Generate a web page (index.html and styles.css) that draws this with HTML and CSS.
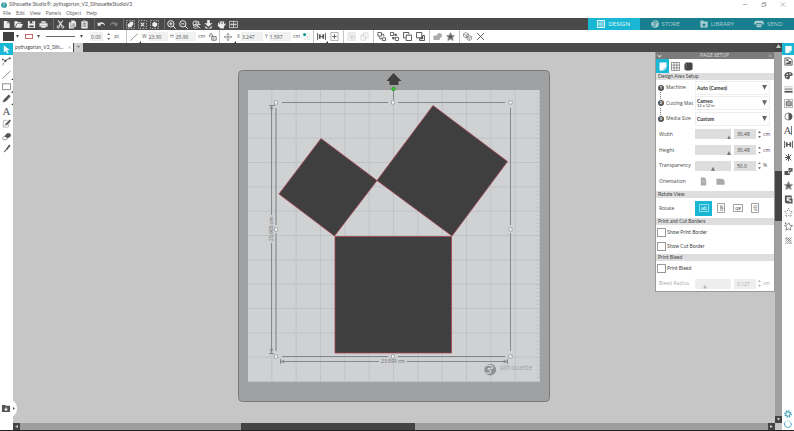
FILE: index.html
```html
<!DOCTYPE html>
<html lang="en">
<head>
<meta charset="utf-8">
<title>Silhouette Studio</title>
<link rel="stylesheet" href="styles.css">
</head>
<body>
<svg class="sprite" aria-hidden="true">
  <symbol id="new" viewBox="0 0 20 20"><path fill="currentColor" d="M4 2h8l5 5v11H4z"/><path d="M12 2v5h5" stroke="#4a4a4a" fill="none"/></symbol>
  <symbol id="open" viewBox="0 0 20 20"><path fill="currentColor" d="M1 3h6l2 2h7v3H6L2 16H1zM7 9h13l-4 8H3z"/></symbol>
  <symbol id="save" viewBox="0 0 20 20"><path fill="currentColor" fill-rule="evenodd" d="M2 2h16v16H2zM6 2v6h8V2zM5 12v4h10v-4z"/><path fill="currentColor" d="M11 3h2v4h-2z"/></symbol>
  <symbol id="print" viewBox="0 0 20 20"><path fill="currentColor" d="M5 3h10v3H5zM1 7h18v8h-3v-3H4v3H1zM5 13h10v4H5z"/></symbol>
  <symbol id="cut" viewBox="0 0 20 20"><path d="M5 1l8 12M15 1L7 13" stroke="currentColor" stroke-width="2.400" fill="none"/><circle cx="5" cy="15.500" r="2.500" stroke="currentColor" stroke-width="2" fill="none"/><circle cx="15" cy="15.500" r="2.500" stroke="currentColor" stroke-width="2" fill="none"/></symbol>
  <symbol id="copy" viewBox="0 0 20 20"><path fill="currentColor" d="M7 1h7l4 4v10H7zM2 5h4v11h8v3H2z"/><path d="M10 9h5M10 12h5" stroke="#4a4a4a" stroke-width="1.500"/></symbol>
  <symbol id="paste" viewBox="0 0 20 20"><path fill="currentColor" d="M3 3h4V1h6v2h4v16H3z"/><path d="M6 8h8M6 11h8M6 14h8M7 4h6" stroke="#4a4a4a" stroke-width="1.300"/></symbol>
  <symbol id="undo" viewBox="0 0 20 20"><path fill="currentColor" d="M1 5l1 9 8-3-3-2c4-2 8 0 11 4C17 6 10 3 4 7z"/></symbol>
  <symbol id="redo" viewBox="0 0 20 20"><path fill="currentColor" d="M19 5l-1 9-8-3 3-2C9 7 5 9 2 13 3 6 10 3 16 7z"/></symbol>
  <symbol id="selall" viewBox="0 0 20 20"><path d="M1 1h18v18H1z" fill="none" stroke="currentColor" stroke-width="1.500" stroke-dasharray="3 3"/><path fill="currentColor" d="M8 4h8v8h-3v4H4V8h4z"/></symbol>
  <symbol id="selnone" viewBox="0 0 20 20"><path d="M1 1h18v18H1z" fill="none" stroke="currentColor" stroke-width="1.500" stroke-dasharray="3 3"/><path d="M6 6l8 8M14 6l-8 8" stroke="currentColor" stroke-width="2.500"/></symbol>
  <symbol id="selcolor" viewBox="0 0 20 20"><path d="M1 1h18v18H1z" fill="none" stroke="currentColor" stroke-width="1.500" stroke-dasharray="3 3"/><path fill="currentColor" d="M5 7l5-3 6 3v6l-5 3-6-3z"/></symbol>
  <symbol id="zoomin" viewBox="0 0 20 20"><g fill="none" stroke="currentColor" stroke-width="2.200"><circle cx="8.500" cy="8.500" r="7"/><path d="M13.500 13.500l6 6M8.500 5v7M5 8.500h7"/></g></symbol>
  <symbol id="zoomout" viewBox="0 0 20 20"><g fill="none" stroke="currentColor" stroke-width="2.200"><circle cx="8.500" cy="8.500" r="7"/><path d="M13.500 13.500l6 6M5 8.500h7"/></g></symbol>
  <symbol id="zoomsel" viewBox="0 0 20 20"><g fill="none" stroke="currentColor" stroke-width="2"><circle cx="8" cy="8" r="6"/><path d="M12.500 12.500l6 6M9 3v10M15 3v7h4" /><path d="M4 10h9v8H4z" stroke-dasharray="2 1"/></g></symbol>
  <symbol id="zoomdrag" viewBox="0 0 20 20"><path fill="currentColor" d="M7 0h6v7h6l-9 8-9-8h6zM1 13l9 6 9-6-3 6H4z"/></symbol>
  <symbol id="hand" viewBox="0 0 20 20"><path d="M5 11L3 6M8 9L7 3M11 9V2M14 10l1-7M16 12l3-4" stroke="currentColor" stroke-width="2.400"/><path fill="currentColor" d="M4 9h13l-2 10H8L1 12z"/></symbol>
  <symbol id="fit" viewBox="0 0 20 20"><path d="M1 3h18v14H1zM10 3v14" fill="none" stroke="currentColor" stroke-width="1.600"/><path d="M4 10h12M7 7l-3 3 3 3M13 7l3 3-3 3" fill="none" stroke="currentColor" stroke-width="1.600"/></symbol>

  <symbol id="gridbox" viewBox="0 0 20 20"><path d="M1 1h18v18H1z" fill="none" stroke="#fff" stroke-width="2.500"/><path d="M5 5h10v10H5zM10 4v12M4 10h12" fill="none" stroke="#fff" stroke-width="1.300"/></symbol>
  <symbol id="swirl" viewBox="0 0 20 20"><circle cx="10" cy="10" r="9.500" fill="currentColor"/><path d="M1 5c5-4 14-2 13 2-1 2-5 0-7 1s4 2 4 5-5 3-8 2" fill="none" stroke="var(--cut, #177f8e)" stroke-width="2"/></symbol>
  <symbol id="library" viewBox="0 0 20 20"><path fill="currentColor" d="M1 1h7l2 3h9v15H1z"/><path d="M10 7v5M6 11h8l-4 5z" fill="#177f8e" stroke="#177f8e" stroke-width="1.500"/></symbol>
  <symbol id="send" viewBox="0 0 24 20"><path fill="currentColor" d="M3 2h18l3 4v5h-4V8H4v3H0V6zM6 10h12v8H6z"/><path d="M8 13h8" stroke="#177f8e" stroke-width="1.500"/></symbol>

  <symbol id="arrow" viewBox="0 0 20 20"><path fill="currentColor" d="M4 1l13 10-6 1 4 6-3 1-4-6-4 4z"/></symbol>
  <symbol id="nodes" viewBox="0 0 20 20"><path d="M2 19C3 12 9 5 19 3M1 5l7 3 6-4" fill="none" stroke="currentColor" stroke-width="1.300"/><circle cx="7.500" cy="8.500" r="2.600" fill="currentColor"/><path fill="currentColor" d="M0 4h3v3H0zM15 1h4v4h-4z"/></symbol>
  <symbol id="line" viewBox="0 0 20 20"><path d="M1 19L19 2" stroke="currentColor" stroke-width="1.500"/></symbol>
  <symbol id="rect" viewBox="0 0 20 20"><path d="M1 4h18v13H1z" fill="none" stroke="currentColor" stroke-width="1.500"/></symbol>
  <symbol id="pencil" viewBox="0 0 20 20"><path fill="currentColor" d="M15 1l4 4L9 16l-8 3 3-7z"/></symbol>
  <symbol id="sketch" viewBox="0 0 20 20"><path d="M12 3H4L2 18h12l2-8" fill="none" stroke="#999" stroke-width="1.500"/><path d="M5 15l8-9" stroke="#999" stroke-width="1.300"/><path fill="currentColor" d="M17 1l3 3-8 9-5 2 2-5z"/></symbol>
  <symbol id="eraser" viewBox="0 0 20 20"><path fill="currentColor" d="M11 3h6l3 3-1 4-6 4-8-4z"/><path d="M5 10c-5 2-5 6-1 7h5l4-3" fill="none" stroke="currentColor" stroke-width="1.300"/></symbol>
  <symbol id="knife" viewBox="0 0 20 20"><path fill="currentColor" d="M16 1l3 3-8 10-3-2zM7 13l3 2-7 4z"/></symbol>

  <symbol id="move" viewBox="0 0 20 20"><path d="M10 1v18M1 10h18M7 4l3-3 3 3M7 16l3 3 3-3M4 7l-3 3 3 3M16 7l3 3-3 3" fill="none" stroke="currentColor" stroke-width="1.500"/></symbol>
  <symbol id="lock" viewBox="0 0 20 20"><path d="M2 10V4c0-3 6-3 6 0v6" fill="none" stroke="currentColor" stroke-width="2"/><path d="M7 9h11v9H7z" fill="none" stroke="currentColor" stroke-width="2"/><path d="M12 11v5" stroke="currentColor" stroke-width="2"/></symbol>
  <symbol id="align" viewBox="0 0 20 20"><path d="M1 2v16M19 2v16" stroke="currentColor" stroke-width="2"/><path fill="currentColor" d="M4 5h4v10H4zM12 5h4v10h-4zM8 9h4v2H8z"/></symbol>
  <symbol id="center" viewBox="0 0 20 20"><path d="M2 1h16v18H2z" fill="none" stroke="currentColor"/><path d="M10 5v10M5 10h10" stroke="currentColor" stroke-width="2"/></symbol>
  <symbol id="group" viewBox="0 0 20 20"><path d="M2 2h16v16H2zM6 6h6v6H6zM9 9h6v6H9z" fill="none" stroke="currentColor" stroke-width="1.500" stroke-dasharray="3 1"/></symbol>
  <symbol id="ungroup" viewBox="0 0 20 20"><path d="M7 2h11v11H7zM2 7h11v11H2z" fill="none" stroke="currentColor" stroke-width="1.500" stroke-dasharray="3 1"/></symbol>
  <symbol id="front" viewBox="0 0 20 20"><path d="M2 1h8v8H2zM12 13h7v6h-7z" fill="none" stroke="currentColor" stroke-width="2"/><path d="M11 5h4v5M6 10v5h5" fill="none" stroke="currentColor" stroke-width="2"/></symbol>
  <symbol id="back" viewBox="0 0 20 20"><path d="M1 1h7v7H1zM12 12h7v7h-7z" fill="none" stroke="currentColor" stroke-width="2"/><path fill="currentColor" d="M10 4h5v5h-5zM5 11h5v5H5z"/></symbol>
  <symbol id="forward" viewBox="0 0 20 20"><path d="M13 5V1H1v12h5M7 7h12v12H7z" fill="none" stroke="currentColor" stroke-width="2.200"/></symbol>
  <symbol id="backward" viewBox="0 0 20 20"><path d="M1 1h12v12H1zM15 8h4v11H8v-4" fill="none" stroke="currentColor" stroke-width="2.200"/><path d="M13 8h3v8H8v-3h5z" fill="currentColor"/></symbol>
  <symbol id="weld" viewBox="0 0 20 20"><path fill="currentColor" d="M1 8h8c0-8 11-7 11 0 0 4-2 5-5 6v4H1z"/></symbol>
  <symbol id="star" viewBox="0 0 20 20"><path fill="#999" stroke="#666" d="M10 1l3 6 6 1-4 4 1 7-6-3-6 3 1-7-4-4 6-1z"/><path d="M10 5l2 4h3l-2 3 1 3-4-2-4 2 1-3-2-3h3z" fill="#555"/></symbol>
  <symbol id="cubes" viewBox="0 0 20 20"><path d="M1 4l5-3 6 3v6l-5 3-6-3zM1 4l6 3 5-3M7 7v6M9 10l5-3 5 3v6l-5 3-5-3zM9 10l5 3 5-3M14 13v6" fill="none" stroke="currentColor" stroke-width="1.200"/></symbol>
  <symbol id="cross" viewBox="0 0 20 20"><path d="M2 2l16 16M18 2L2 18" stroke="currentColor" stroke-width="2"/></symbol>

  <symbol id="page" viewBox="0 0 20 20"><path fill="#fff" d="M3 2h14v11l-5 5H3z"/><path d="M12 18v-5h5" fill="none" stroke="#1ab7d4"/></symbol>
  <symbol id="pixscan" viewBox="0 0 20 20"><path d="M2 2h11l5 4v12H2z" fill="none" stroke="currentColor" stroke-width="2"/><path d="M5 5h5v4H5zM10 9h6v3h-6zM5 12h10v4H5z" fill="currentColor"/></symbol>
  <symbol id="palette" viewBox="0 0 20 20"><path fill="currentColor" fill-rule="evenodd" d="M10 2c12 0 11 9 5 9-4 0-1 3-3 6-3 3-11 0-11-7 0-5 4-8 9-8zM6 6v3h3V6zM12 5v3h3V5zM5 11v3h3v-3z"/></symbol>
  <symbol id="lines" viewBox="0 0 20 20"><path d="M1 4h18" stroke="currentColor" stroke-width="1" stroke-dasharray="3 1"/><path d="M1 9h18" stroke="currentColor" stroke-width="2"/><path d="M1 15h18" stroke="currentColor" stroke-width="4"/></symbol>
  <symbol id="trace" viewBox="0 0 20 20"><path d="M1 1h18v18H1z" fill="none" stroke="currentColor"/><path d="M5 6h2l2-2h3l2 2h2v9H5z" fill="#aaa" stroke="currentColor" stroke-width="1.800"/></symbol>
  <symbol id="contrast" viewBox="0 0 20 20"><circle cx="10" cy="10" r="8" fill="none" stroke="currentColor" stroke-width="1.500"/><path fill="currentColor" d="M10 2a8 8 0 010 16z"/></symbol>
  <symbol id="burst" viewBox="0 0 20 20"><path d="M10 2v16M2 10h12M4 4l12 12M16 4L4 16" stroke="currentColor" stroke-width="2.200"/></symbol>
  <symbol id="modify" viewBox="0 0 20 20"><path fill="currentColor" d="M10 2h9v8h-4v2h-5zM1 9h8v5h4v4H1z"/><path d="M12 8l4-4" stroke="#fff" stroke-width="1.500"/></symbol>
  <symbol id="nest" viewBox="0 0 20 20"><path fill="currentColor" fill-rule="evenodd" d="M2 1h15v6l2 2v10H6l-4-3zM6 5v8h5v2h5v-3h-4V8h3V5z"/><path d="M8 8h3v3" fill="none" stroke="currentColor"/></symbol>
  <symbol id="stardots" viewBox="0 0 20 20"><path d="M10 1l3 6 6 1-4 4 1 7-6-3-6 3 1-7-4-4 6-1z" fill="none" stroke="currentColor" stroke-width="2" stroke-dasharray="2 2.500"/></symbol>
  <symbol id="starline" viewBox="0 0 20 20"><path d="M11 2l2 5 6 1-5 4 1 6-5-3-6 3 2-7-5-3 6-2z" fill="none" stroke="currentColor" stroke-width="1.500"/><path fill="currentColor" d="M2 1h3v3H2z"/></symbol>
  <symbol id="hatch" viewBox="0 0 20 20"><path d="M3 7l4-4M3 12l9-9M3 17L17 3M8 17l9-9M13 17l4-4" fill="none" stroke="currentColor" stroke-width="2" stroke-dasharray="3 1"/><path d="M3 4l4 3M8 8l5 4M13 14l4 3" stroke="currentColor"/></symbol>
  <symbol id="gear" viewBox="0 0 20 20"><circle cx="10" cy="10" r="5.500" fill="none" stroke="currentColor" stroke-width="2.500"/><circle cx="10" cy="10" r="8" fill="none" stroke="currentColor" stroke-width="3" stroke-dasharray="3.200 3.080"/></symbol>
  <symbol id="refresh" viewBox="0 0 20 20"><path d="M4 4a8.500 8.500 0 1013 2" fill="none" stroke="currentColor" stroke-width="2.200"/><path d="M8 2a8 8 0 017 2" fill="none" stroke="#8cc" stroke-width="2"/></symbol>
  <symbol id="grid" viewBox="0 0 20 20"><path d="M1 1h18v18H1zM7 1v18M13 1v18M1 7h18M1 13h18" fill="none" stroke="currentColor" stroke-width="1.200"/></symbol>
  <symbol id="regmark" viewBox="0 0 20 20"><path fill="currentColor" d="M3 1h14v2h2v14h-4v2H4v-2H1V4h2z"/><path d="M5 4v12M3 6h4" stroke="#888"/></symbol>
  <symbol id="portrait" viewBox="0 0 20 20"><path fill="currentColor" d="M4 1h8l4 4v14H4z"/><path d="M6 8h8M6 12h8" stroke="#ddd"/></symbol>
  <symbol id="landscape" viewBox="0 0 20 20"><path fill="currentColor" d="M1 4h13l5 4v9H1z"/></symbol>
  <symbol id="folder" viewBox="0 0 20 20"><path fill="currentColor" d="M1 2h7l2 2h9v14H1z"/><path d="M10 7v4M7 11h6l-3 4z" fill="#fff" stroke="#fff" stroke-width="1.500"/></symbol>
</svg>

<div class="app">
  <header class="titlebar">
    <svg class="logo"><use href="#swirl"/></svg>
    <span class="title">Silhouette Studio®: pythagorian_V2_SilhouetteStudioV3</span>
    <div class="window-buttons">
      <button aria-label="Minimize"><svg viewBox="0 0 10 10"><path d="M1 5h8"/></svg></button>
      <button aria-label="Restore"><svg viewBox="0 0 10 10"><path d="M1 3h6v6H1zM3 3V1h6v6H7"/></svg></button>
      <button aria-label="Close"><svg viewBox="0 0 10 10"><path d="M1 1l8 8M9 1L1 9"/></svg></button>
    </div>
  </header>

  <nav class="menubar" aria-label="Menu">
    <button>File</button><button>Edit</button><button>View</button><button>Panels</button><button>Object</button><button>Help</button>
  </nav>

  <div class="mainbar">
    <div class="tools four">
      <button aria-label="New"><svg><use href="#new"/></svg></button><button aria-label="Open"><svg><use href="#open"/></svg></button><button aria-label="Save"><svg><use href="#save"/></svg></button><button aria-label="Print"><svg><use href="#print"/></svg></button>
    </div>
    <div class="tools three">
      <button aria-label="Cut"><svg><use href="#cut"/></svg></button><button aria-label="Copy"><svg><use href="#copy"/></svg></button><button aria-label="Paste"><svg><use href="#paste"/></svg></button>
    </div>
    <div class="tools two">
      <button aria-label="Undo"><svg><use href="#undo"/></svg></button><button aria-label="Redo" class="faded"><svg><use href="#redo"/></svg></button>
    </div>
    <div class="tools three">
      <button aria-label="Select all"><svg><use href="#selall"/></svg></button><button aria-label="Deselect all"><svg><use href="#selnone"/></svg></button><button aria-label="Select by color"><svg><use href="#selcolor"/></svg></button>
    </div>
    <div class="tools six">
      <button aria-label="Zoom in"><svg><use href="#zoomin"/></svg></button><button aria-label="Zoom out"><svg><use href="#zoomout"/></svg></button><button aria-label="Zoom selection"><svg><use href="#zoomsel"/></svg></button><button aria-label="Drag zoom"><svg><use href="#zoomdrag"/></svg></button><button aria-label="Pan"><svg><use href="#hand"/></svg></button><button aria-label="Fit to page"><svg><use href="#fit"/></svg></button>
    </div>
    <nav class="modes" aria-label="Mode">
      <a class="active" href="#design"><svg><use href="#gridbox"/></svg>DESIGN</a>
      <a href="#store"><svg><use href="#swirl"/></svg>STORE</a>
      <a href="#lib"><svg><use href="#library"/></svg>LIBRARY</a>
      <a href="#output"><svg class="wide"><use href="#send"/></svg>SEND</a>
    </nav>
  </div>

  <div class="options">
    <div class="opt-group stroke-group">
      <button class="drop" aria-label="Fill color"><i class="swatch fill"></i><i class="caret"></i></button>
      <button class="drop" aria-label="Line color"><i class="swatch outline"></i><i class="caret"></i></button>
      <button class="drop" aria-label="Line style"><i class="rule"></i><i class="caret"></i></button>
      <label class="field"><input aria-label="Line thickness" value="0.00"><i class="spin"></i>pt</label>
    </div>
    <div class="opt-group size-group">
      <button class="more" aria-label="Scale"><svg><use href="#line"/></svg></button>
      <label class="field">W<input value="23.90"></label>
      <label class="field">H<input value="25.90"></label>
      <span>cm</span>
      <button aria-label="Lock aspect ratio"><svg><use href="#lock"/></svg></button>
    </div>
    <div class="opt-group place-group">
      <button class="more" aria-label="Move"><svg><use href="#move"/></svg></button>
      <label class="field">X<input value="3.247"></label>
      <label class="field">Y<input value="1.597"></label>
      <span>cm</span>
      <button aria-label="Anchor"><svg viewBox="0 0 20 20"><circle cx="4" cy="4" r="4" fill="#159a9c"/><path d="M9 3h8v13H3v-6" fill="none" stroke="#ccc"/><path d="M9 10h5M11 8v5" stroke="#999"/></svg></button>
    </div>
    <div class="opt-group icons">
      <button class="more" aria-label="Align"><svg><use href="#align"/></svg></button><button aria-label="Center to page"><svg><use href="#center"/></svg></button>
    </div>
    <div class="opt-group icons muted">
      <button aria-label="Group"><svg><use href="#group"/></svg></button><button aria-label="Ungroup"><svg><use href="#ungroup"/></svg></button>
    </div>
    <div class="opt-group icons">
      <button aria-label="Bring to front"><svg><use href="#front"/></svg></button><button aria-label="Send to back"><svg><use href="#back"/></svg></button><button aria-label="Bring forward"><svg><use href="#forward"/></svg></button><button aria-label="Send backward"><svg><use href="#backward"/></svg></button>
    </div>
    <div class="opt-group icons">
      <button aria-label="Weld"><svg class="pale"><use href="#weld"/></svg></button><button aria-label="Offset"><svg><use href="#star"/></svg></button>
    </div>
    <div class="opt-group icons last">
      <button aria-label="Duplicate"><svg><use href="#cubes"/></svg></button><button aria-label="Delete"><svg><use href="#cross"/></svg></button>
    </div>
  </div>

  <div class="body">
    <aside class="left-tools">
      <div class="left-list">
        <button class="active" aria-label="Select"><svg><use href="#arrow"/></svg></button>
        <button aria-label="Edit points"><svg><use href="#nodes"/></svg></button>
        <button class="more" aria-label="Line"><svg><use href="#line"/></svg></button>
        <button class="more" aria-label="Rectangle"><svg><use href="#rect"/></svg></button>
        <button class="more" aria-label="Freehand"><svg><use href="#pencil"/></svg></button>
        <button class="glyph" aria-label="Text">A</button>
        <button aria-label="Sketch"><svg><use href="#sketch"/></svg></button>
        <button aria-label="Eraser"><svg><use href="#eraser"/></svg></button>
        <button aria-label="Knife"><svg><use href="#knife"/></svg></button>
      </div>
      <button class="drawer" aria-label="Library drawer"><svg><use href="#folder"/></svg><i></i></button>
    </aside>

    <div class="tabs">
      <button class="doc-tab"><span>pythagorian_V2_Silh...</span><svg><use href="#cross"/></svg></button>
      <button class="add-tab" aria-label="New tab">+</button>
    </div>

    <main class="stage">
      <svg class="mat" viewBox="238 70 312 332" role="img" aria-label="Cutting mat">
        <defs>
          <pattern id="cells" x="248" y="90" width="24.330" height="24.330" patternUnits="userSpaceOnUse"><path d="M24 0v24.330M0 24h24.330" stroke="#b9bcbe" stroke-width=".8"/></pattern>
          <pattern id="ticks" x="536" y="90" width="4" height="4.060" patternUnits="userSpaceOnUse"><path d="M0 3.500h4" stroke="#b9bbbd" stroke-width=".6"/></pattern>
        </defs>
        <rect x="238.500" y="70.500" width="311" height="331" rx="4" fill="#a0a1a3" stroke="#77797b"/>
        <rect x="248" y="90" width="292" height="292" fill="#cfd1d3"/>
        <rect x="248" y="90" width="292" height="292" fill="url(#cells)"/>
        <rect x="536" y="90" width="4" height="292" fill="url(#ticks)"/>
        <path d="M393.500 73l8 8h-3v4h-9v-4h-3z" fill="#3f3f3f"/>
        <g fill="#3f3f3f" stroke="#a5454e" stroke-width=".8">
          <path d="M321 138.500L377 180.500 334.500 236 279 194z"/>
          <path d="M433 105.500L507.500 161.500 452 236 377 180.500z"/>
          <path d="M335 236.500H451.500V353H335z"/>
        </g>
        <g fill="none" stroke="#85878a">
          <path d="M282 102.500h106M398 102.500h107M282 356.500h106M398 356.500h107M393.500 90v10M510.500 108v117M510.500 233v118"/>
          <path d="M276 108v117M276 233v118" stroke="#a4a6a8" stroke-width="2"/>
          <path d="M271.500 105v110M271.500 243v110M269 105.500h6M269 353.500h5"/>
          <path d="M280 361.500h99M407 361.500h100M280.500 359v5M507.500 359v5"/>
          <g stroke-width=".7"><path d="M270 109h3l-1.500-3zM270 349h3l-1.500 3zM284 360v3l-3-1.500zM504 360v3l3-1.500z"/></g>
        </g>
        <g fill="#fff" stroke="#85878a" stroke-width=".6">
          <rect x="274.500" y="101" width="3" height="3"/><rect x="391.500" y="101" width="3" height="3"/><rect x="509" y="101" width="3" height="3"/>
          <rect x="274.500" y="228" width="3" height="3"/><rect x="509" y="228" width="3" height="3"/>
          <rect x="274.500" y="355" width="3" height="3"/><rect x="391.500" y="355" width="3" height="3"/><rect x="509" y="355" width="3" height="3"/>
        </g>
        <circle cx="393.500" cy="89" r="1.800" fill="#35d02c" stroke="#23851c" stroke-width=".6"/>
        <text class="dim" x="393" y="363" text-anchor="middle">23.899 cm</text>
        <text class="dim" transform="translate(273 229) rotate(-90)" text-anchor="middle">25.905 cm</text>
        <g transform="translate(484 363.500) scale(.62)" class="mark"><use href="#swirl" width="20" height="20"/></g>
        <text class="brand" x="500" y="370">silhouette</text>
      </svg>

      <section class="panel" aria-label="Page setup">
        <header><i class="chev"></i><h2>PAGE SETUP</h2><button aria-label="Close panel"><svg><use href="#cross"/></svg></button></header>
        <div class="panel-tabs">
          <button class="active" aria-label="Page"><svg><use href="#page"/></svg></button><button aria-label="Grid"><svg><use href="#grid"/></svg></button><button aria-label="Registration marks"><svg><use href="#regmark"/></svg></button>
        </div>
        <h3>Design Area Setup</h3>
        <div class="setup">
          <div class="row"><label class="step" for="machine"><b>1</b>Machine</label><div class="pick"><select id="machine"><option>Auto (Cameo)</option></select></div></div>
          <div class="row"><label class="step" for="cutmat"><b>2</b>Cutting Mat</label><div class="pick"><select id="cutmat"><option>Cameo</option></select><small>12 x 12 in</small></div></div>
          <div class="row"><label class="step" for="media"><b>3</b>Media Size</label><div class="pick"><select id="media"><option>Custom</option></select></div></div>
          <div class="row"><label for="width">Width</label><input type="range" aria-label="Width slider" value="100"><input class="num" id="width" value="30.48"><i class="spin"></i><span>cm</span></div>
          <div class="row"><label for="height">Height</label><input type="range" aria-label="Height slider" value="100"><input class="num" id="height" value="30.48"><i class="spin"></i><span>cm</span></div>
          <div class="row"><label for="transp">Transparency</label><input type="range" aria-label="Transparency slider" value="50"><input class="num" id="transp" value="50.0"><i class="spin"></i><span>%</span></div>
          <div class="row"><span>Orientation</span><div class="choices pale"><button aria-label="Portrait"><svg><use href="#portrait"/></svg></button><button aria-label="Landscape"><svg><use href="#landscape"/></svg></button></div></div>
        </div>
        <h3>Rotate View</h3>
        <div class="row rotate"><span>Rotate</span>
          <div class="choices">
            <button class="active" aria-label="0 degrees"><svg viewBox="0 0 20 20"><path d="M1 3h18v14H1z"/><text x="10" y="13.500">ab</text></svg></button>
            <button aria-label="90 degrees"><svg viewBox="0 0 20 20"><path d="M3 1h14v18H3z"/><text transform="translate(7 10) rotate(90)">ab</text></svg></button>
            <button aria-label="180 degrees"><svg viewBox="0 0 20 20"><path d="M1 3h18v14H1z"/><text transform="translate(10 7) rotate(180)">ab</text></svg></button>
            <button aria-label="270 degrees"><svg viewBox="0 0 20 20"><path d="M3 1h14v18H3z"/><text transform="translate(13 10) rotate(-90)">ab</text></svg></button>
          </div>
        </div>
        <h3>Print and Cut Borders</h3>
        <div class="checks">
          <label><input type="checkbox">Show Print Border</label>
          <label><input type="checkbox">Show Cut Border</label>
        </div>
        <h3>Print Bleed</h3>
        <div class="checks"><label><input type="checkbox">Print Bleed</label></div>
        <div class="row disabled"><label for="bleed">Bleed Radius</label><input type="range" aria-label="Bleed radius slider" value="25" disabled><input class="num" id="bleed" value="0.127" disabled><i class="spin"></i><span>cm</span></div>
      </section>
    </main>

    <div class="vscroll"><i class="up"></i><i class="thumb"></i><i class="down"></i></div>
    <div class="hscroll"><i class="prev"></i><i class="thumb"></i><i class="next"></i></div>

    <aside class="right-tools">
      <button class="active" aria-label="Page setup"><svg><use href="#page"/></svg></button>
      <div class="right-list">
        <button aria-label="PixScan"><svg><use href="#pixscan"/></svg></button>
        <button aria-label="Fill"><svg><use href="#palette"/></svg></button>
        <button aria-label="Line style"><svg><use href="#lines"/></svg></button>
        <button aria-label="Trace"><svg><use href="#trace"/></svg></button>
        <button aria-label="Image effects"><svg><use href="#contrast"/></svg></button>
        <button class="glyph cursor" aria-label="Text style">A</button>
        <button aria-label="Transform"><svg><use href="#align"/></svg></button>
        <button aria-label="Replicate"><svg><use href="#burst"/></svg></button>
        <button aria-label="Modify"><svg><use href="#modify"/></svg></button>
        <button aria-label="Offset"><svg><use href="#star"/></svg></button>
        <button aria-label="Nesting"><svg><use href="#nest"/></svg></button>
        <button aria-label="Rhinestones"><svg><use href="#stardots"/></svg></button>
        <button aria-label="Sketch"><svg><use href="#starline"/></svg></button>
        <button aria-label="Stipple"><svg><use href="#hatch"/></svg></button>
      </div>
      <div class="prefs">
        <button aria-label="Preferences"><svg><use href="#gear"/></svg></button>
        <button aria-label="Updates"><svg><use href="#refresh"/></svg></button>
      </div>
    </aside>
  </div>
</div>
</body>
</html>
```
FILE: styles.css
```css
* { box-sizing: border-box; }
body {
  margin: 0;
  font: 5px/7px "Open Sans", "Noto Sans", sans-serif;
  color: #444;
  background: #fff;
}
button, input, select {
  font: inherit;
  color: inherit;
  border: 0;
  margin: 0;
  padding: 0;
  background: none;
  border-radius: 0;
  outline: 0;
  min-width: 0;
}
button { display: flex; align-items: center; justify-content: center; }
svg { display: block; flex: none; }
i { display: block; flex: none; }
.sprite { position: absolute; width: 0; height: 0; }
.title, .doc-tab, .checks, .pick, .panel h3 { font-family: Lato, "Open Sans", sans-serif; }

.app {
  display: grid;
  grid-template-rows: 9px 9px 12px 13px 1fr;
  height: 100vh;
  overflow: hidden;
  border-bottom: 1px solid #222;
}

.titlebar { display: flex; align-items: center; gap: 2px; padding-left: 1px; color: #555; }
.logo { width: 6px; height: 6px; color: #1c929b; --cut: #e6f4f5; }
.window-buttons { display: flex; gap: 13px; margin-left: auto; padding-right: 8px; }
.window-buttons svg { width: 6px; height: 5px; fill: none; stroke: #777; stroke-width: 1; }

.menubar { display: flex; align-items: center; gap: 5px; padding-left: 3px; color: #555; }

.mainbar { display: flex; gap: 4px; background: #4a4a4a; color: #ececec; }
.tools { display: flex; justify-content: space-around; }
.tools + .tools { box-shadow: -1px 0 #6c6c6c; }
.tools svg { width: 9px; height: 9px; }
.two { width: 25px; }
.three { width: 37px; }
.four { width: 50px; }
.six { width: 75px; }
.faded { color: #858585; }
.modes { display: flex; width: 206px; margin-left: auto; background: #177f8e; }
.modes a {
  flex: 1;
  display: flex;
  align-items: center;
  justify-content: center;
  gap: 3px;
  color: #a9cdd3;
  font-size: 6px;
  text-decoration: none;
}
.modes svg { width: 8px; height: 8px; }
.modes .wide { width: 10px; }
.modes .active { background: #1ab7d4; color: #e6fbff; }

.options { display: flex; color: #555; }
.opt-group { display: grid; align-items: center; border-right: 1px solid #c4c4c4; }
.stroke-group { grid-template-columns: 22px 21px 43px 40px; }
.size-group { grid-template-columns: 14px 28px 28px 9px 13px; }
.place-group { grid-template-columns: 16px 28px 28px 9px 12px; }
.opt-group svg { width: 9px; height: 9px; }
.size-group svg, .place-group svg { width: 8px; height: 8px; }
.opt-group span { text-align: center; }
.opt-group.icons { display: flex; padding: 0 2px 0 1px; }
.icons button { width: 13px; height: 13px; }
.muted { color: #bbb; }
.pale { color: #aaa; }
.last { border: 0; }
.drop { justify-content: space-between; height: 13px; padding: 0 3px; }
.swatch { width: 11px; height: 9px; }
.swatch.fill { background: #404040; }
.swatch.outline { width: 8px; height: 5px; border: 1px solid #c66a6a; }
.rule { width: 29px; height: 1px; background: #666; }
.caret { width: 3px; height: 3px; background: #555; clip-path: polygon(0 0, 100% 0, 50% 100%); }
.field { display: flex; align-items: center; gap: 1px; padding: 0 1px; }
.field input { flex: 1; height: 9px; background: #f1f1f1; padding-left: 1px; }
.stroke-group .field { padding: 0 7px 0 4px; gap: 4px; }
.spin { position: relative; width: 3px; height: 7px; }
.spin::before, .spin::after { content: ""; position: absolute; left: 0; width: 3px; height: 2px; background: #666; }
.spin::before { top: 0; clip-path: polygon(50% 0, 100% 100%, 0 100%); }
.spin::after { bottom: 0; clip-path: polygon(0 0, 100% 0, 50% 100%); }
.more { position: relative; }
.more::after {
  content: "";
  position: absolute;
  right: 0;
  bottom: 0;
  width: 2px;
  height: 2px;
  background: #333;
  clip-path: polygon(100% 0, 100% 100%, 0 100%);
}
.opt-group .more { height: 13px; }

.body {
  display: grid;
  grid-template-columns: 13px 1fr 7px 12px;
  grid-template-rows: 9px 1fr 7px;
  grid-template-areas:
    "left tabs vbar right"
    "left stage vbar right"
    "left hbar corner right";
  min-height: 0;
  background: #c6c6c6;
}

.left-tools { grid-area: left; position: relative; z-index: 1; background: #fff; color: #555; }
.left-list { display: flex; flex-direction: column; height: 112px; }
.left-list button { flex: 1; min-height: 0; }
.left-list svg { width: 9px; height: 9px; }
.left-list .active { background: #1ab7d4; color: #fff; }
.glyph { font: 11px/11px "Liberation Serif", serif; }
.cursor::after { content: ""; width: 1px; height: 9px; background: #777; }
.drawer {
  position: absolute;
  left: 0;
  bottom: 12px;
  width: 17px;
  height: 19px;
  justify-content: flex-start;
  gap: 2px;
  padding-left: 1px;
  background: #fff;
  border-radius: 0 9px 9px 0;
}
.drawer svg { width: 10px; height: 9px; }
.drawer i { width: 2px; height: 3px; background: #555; clip-path: polygon(0 0, 100% 50%, 0 100%); }

.tabs { grid-area: tabs; display: flex; background: #4a4a4a; }
.doc-tab { width: 60px; padding: 0 2px; justify-content: space-between; background: #fff; white-space: nowrap; }
.doc-tab svg { width: 3px; height: 3px; }
.add-tab { width: 9px; margin-left: 1px; background: #d0d0d0; }

.stage { grid-area: stage; position: relative; display: flex; justify-content: center; align-items: flex-start; padding-top: 18px; overflow: hidden; }
.mat { width: 312px; height: 332px; }
.dim { font-size: 5px; fill: #6a6c6e; }
.mark { color: #8e9092; --cut: #cfd1d3; }
.brand { font-size: 7px; fill: #a3a5a7; }

.panel { position: absolute; top: 0; right: 0; width: 120px; background: #fff; border: 1px solid #999; border-top: 0; }
.panel header { display: flex; align-items: center; justify-content: space-between; height: 7px; padding: 0 2px; background: #7b7b7b; color: #ddd; }
.panel h2, .panel h3 { margin: 0; font-size: 5px; font-weight: 400; line-height: 7px; }
.panel header svg { width: 4px; height: 4px; }
.chev { width: 3px; height: 3px; border: solid #ddd; border-width: 0 1px 1px 0; transform: rotate(45deg); }
.panel h3 { height: 7px; padding-left: 2px; background: #dedede; }
.panel-tabs { display: flex; height: 14px; }
.panel-tabs button { width: 13px; }
.panel-tabs svg { width: 9px; height: 9px; }
.panel-tabs .active { background: #1ab7d4; }
.panel-tabs .active svg { width: 10px; height: 11px; }
.setup { display: grid; grid-auto-rows: 1fr; height: 109px; margin-bottom: 2px; }
.row { display: flex; align-items: center; padding: 0 4px 0 3px; }
.row > :first-child { width: 36px; flex: none; white-space: nowrap; }
.step { position: relative; display: flex; align-items: center; gap: 2px; }
.step b { width: 6px; height: 6px; margin-left: -1px; border-radius: 50%; background: #555; color: #fff; font-size: 4px; line-height: 6px; text-align: center; }
.row:nth-child(-n+2) .step::after { content: ""; position: absolute; left: 1px; top: 8px; height: 7px; border-left: 1px dotted #777; }
.pick { position: relative; flex: 1; height: 14px; display: flex; flex-direction: column; justify-content: center; padding-left: 1px; border: 1px solid #eee; color: #333; }
.pick select { appearance: none; width: 100%; font-weight: 700; line-height: 6px; height: 6px; }
.pick small { font-size: 4px; line-height: 4px; }
.pick::after { content: ""; position: absolute; right: 2px; top: 3px; width: 5px; height: 5px; background: #666; clip-path: polygon(0 0, 100% 0, 50% 100%); }
input[type="range"] { appearance: none; width: 36px; height: 10px; background: #dedede; }
input[type="range"]::-webkit-slider-runnable-track { height: 10px; padding-top: 6px; }
input[type="range"]::-webkit-slider-thumb { appearance: none; width: 4px; height: 4px; background: #777; clip-path: polygon(50% 0, 100% 100%, 0 100%); }
.num { width: 22px; height: 10px; margin: 0 2px 0 3px; padding-left: 3px; background: #dedede; }
.row .spin { margin-right: 2px; }
.choices { display: flex; }
.choices button { width: 17px; height: 15px; }
.choices svg { width: 10px; height: 10px; fill: none; stroke: currentColor; stroke-width: 1; }
.choices.pale svg { width: 9px; height: 9px; stroke: none; }
.choices text { font-size: 10px; text-anchor: middle; fill: currentColor; stroke: none; }
.choices .active { background: #1ab7d4; color: #fff; }
.rotate { height: 20px; }
.checks { padding-bottom: 1px; }
.checks label { display: flex; align-items: center; gap: 1px; height: 14px; padding-left: 1px; }
.checks input { appearance: none; width: 9px; height: 9px; border: 1px solid #999; background: #fff; }
.disabled { height: 15px; color: #aaa; }
.disabled input, .disabled input[type="range"] { background: #eee; }
.disabled input[type="range"]::-webkit-slider-thumb { background: #bbb; }
.disabled .spin { opacity: .5; }

.vscroll { grid-area: vbar; display: grid; grid-template-rows: 9px 119fr 50fr 195fr 7px; background: #a0a0a0; }
.hscroll { grid-area: hbar; display: grid; grid-template-columns: 7px 221fr 174fr 353fr 7px; background: #9e9e9e; }
.vscroll i, .hscroll i { background: #444; position: relative; }
.vscroll .up { grid-row: 1; }
.vscroll .thumb { grid-row: 3; }
.vscroll .down { grid-row: 5; }
.hscroll .prev { grid-column: 1; }
.hscroll .thumb { grid-column: 3; }
.hscroll .next { grid-column: 5; }
.up::after, .down::after, .prev::after, .next::after { content: ""; position: absolute; inset: 2px; background: #c6c6c6; }
.up::after { inset: 1px 1px 4px; clip-path: polygon(50% 0, 100% 100%, 0 100%); }
.down::after { clip-path: polygon(0 0, 100% 0, 50% 100%); }
.prev::after { clip-path: polygon(100% 0, 100% 100%, 0 50%); }
.next::after { clip-path: polygon(0 0, 100% 50%, 0 100%); }

.right-tools { grid-area: right; display: flex; flex-direction: column; background: #fff; color: #555; }
.right-tools > button { height: 12px; }
.right-tools svg { width: 9px; height: 9px; }
.right-tools > .active { background: #1ab7d4; }
.right-list { display: flex; flex-direction: column; height: 192px; }
.right-list button { flex: 1; min-height: 0; }
.prefs { margin-top: auto; padding-bottom: 1px; color: #3297b5; }
.prefs button { width: 100%; height: 10px; }
.prefs svg { width: 8px; height: 8px; }
```
